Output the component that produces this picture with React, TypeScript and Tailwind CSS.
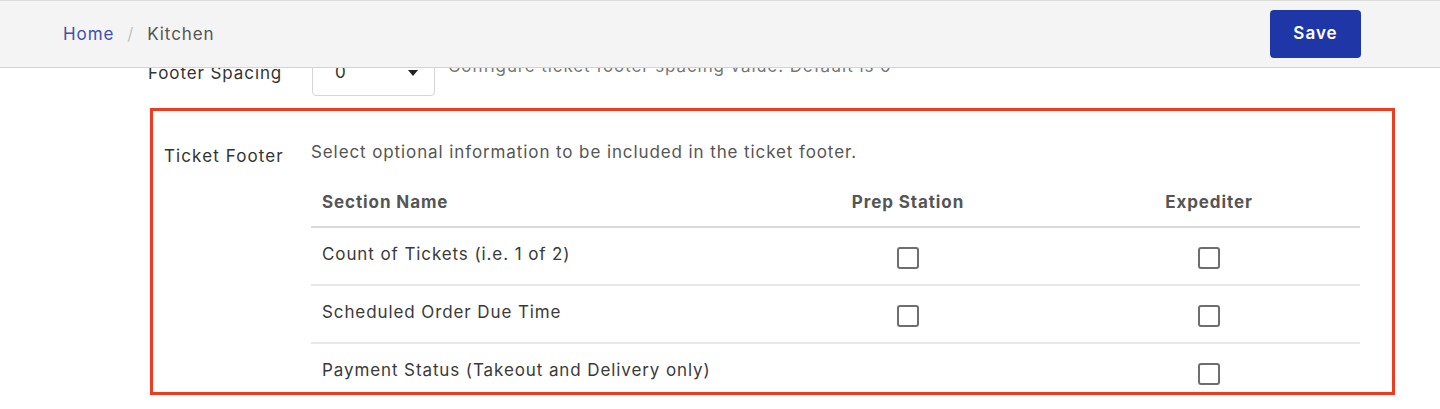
export default function App() {
  const rows = [
    { name: "Count of Tickets (i.e. 1 of 2)", prep: true, expo: true },
    { name: "Scheduled Order Due Time", prep: true, expo: true },
    { name: "Payment Status (Takeout and Delivery only)", prep: false, expo: true },
  ];

  const Checkbox = () => (
    <span className="inline-block w-[22px] h-[22px] border-2 border-[#6e6e6e] rounded-[3px] bg-white" />
  );

  return (
    <div className="h-[409px] overflow-hidden bg-white tracking-[0.9px] font-['Inter','Liberation_Sans',sans-serif]">
      {/* Top bar */}
      <div className="relative z-10 h-[68px] bg-[#f4f4f4] border-t border-[#dcdcdc] border-b border-b-[#d4d4d4] flex items-center justify-between pl-[63px] pr-[79px]">
        <div className="flex items-center text-[17px] pt-[1px]">
          <span className="text-[#3f4fae]">Home</span>
          <span className="text-[#c4c4c4] mx-[13px]">/</span>
          <span className="text-[#555]">Kitchen</span>
        </div>
        <button className="w-[91px] h-[48px] bg-[#1f36a6] rounded-[4px] text-white text-[17px] font-semibold tracking-[1px]">
          Save
        </button>
      </div>

      {/* Scrolled content */}
      <div className="h-[341px] overflow-hidden">
        <div className="-mt-[18px]">
          {/* Footer Spacing row */}
          <div className="flex items-start pl-[148px]">
            <div className="w-[164px] pt-[11px] text-[17px] text-[#333]">Footer Spacing</div>
            <div className="w-[123px] h-[46px] border border-[#d6d6d6] rounded-[4px] flex items-center justify-between pl-[22px] pr-[16px] text-[17px] text-[#333]">
              <span>0</span>
              <svg width="10" height="6" viewBox="0 0 10 6">
                <path d="M0 0h10L5 6z" fill="#222" />
              </svg>
            </div>
            <div className="ml-[13px] pt-[4px] text-[17px] text-[#777]">
              Configure ticket footer spacing value. Default is 0
            </div>
          </div>

          {/* Ticket Footer section (highlighted) */}
          <div className="ml-[150px] mt-[12px] w-[1245px] h-[287px] overflow-hidden border-[3px] border-[#ef3b1f] flex pl-[11px]">
            <div className="w-[147px] pt-[33px] text-[17px] text-[#333] tracking-[1.1px]">Ticket Footer</div>
            <div className="w-[1049px] pt-[30px]">
              <p className="text-[17px] text-[#555] leading-[22px]">
                Select optional information to be included in the ticket footer.
              </p>
              <table className="mt-[12px] w-full border-collapse">
                <thead>
                  <tr className="h-[52px] border-b-2 border-[#dadada] text-[17px] font-semibold text-[#555]">
                    <th className="w-[447px] text-left px-[11px] pt-[4px]">Section Name</th>
                    <th className="w-[300px] text-center pt-[4px]">Prep Station</th>
                    <th className="text-center pt-[4px]">Expediter</th>
                  </tr>
                </thead>
                <tbody>
                  {rows.map((r) => (
                    <tr key={r.name} className="h-[58px] border-b-2 border-[#e8e8e8] text-[17px] text-[#3a3a3a]">
                      <td className="px-[11px] pb-[2px]">{r.name}</td>
                      <td className="text-center align-middle pt-[3px]">
                        <div className="flex justify-center">{r.prep && <Checkbox />}</div>
                      </td>
                      <td className="text-center align-middle pt-[3px]">
                        <div className="flex justify-center">{r.expo && <Checkbox />}</div>
                      </td>
                    </tr>
                  ))}
                </tbody>
              </table>
            </div>
          </div>
        </div>
      </div>
    </div>
  );
}
